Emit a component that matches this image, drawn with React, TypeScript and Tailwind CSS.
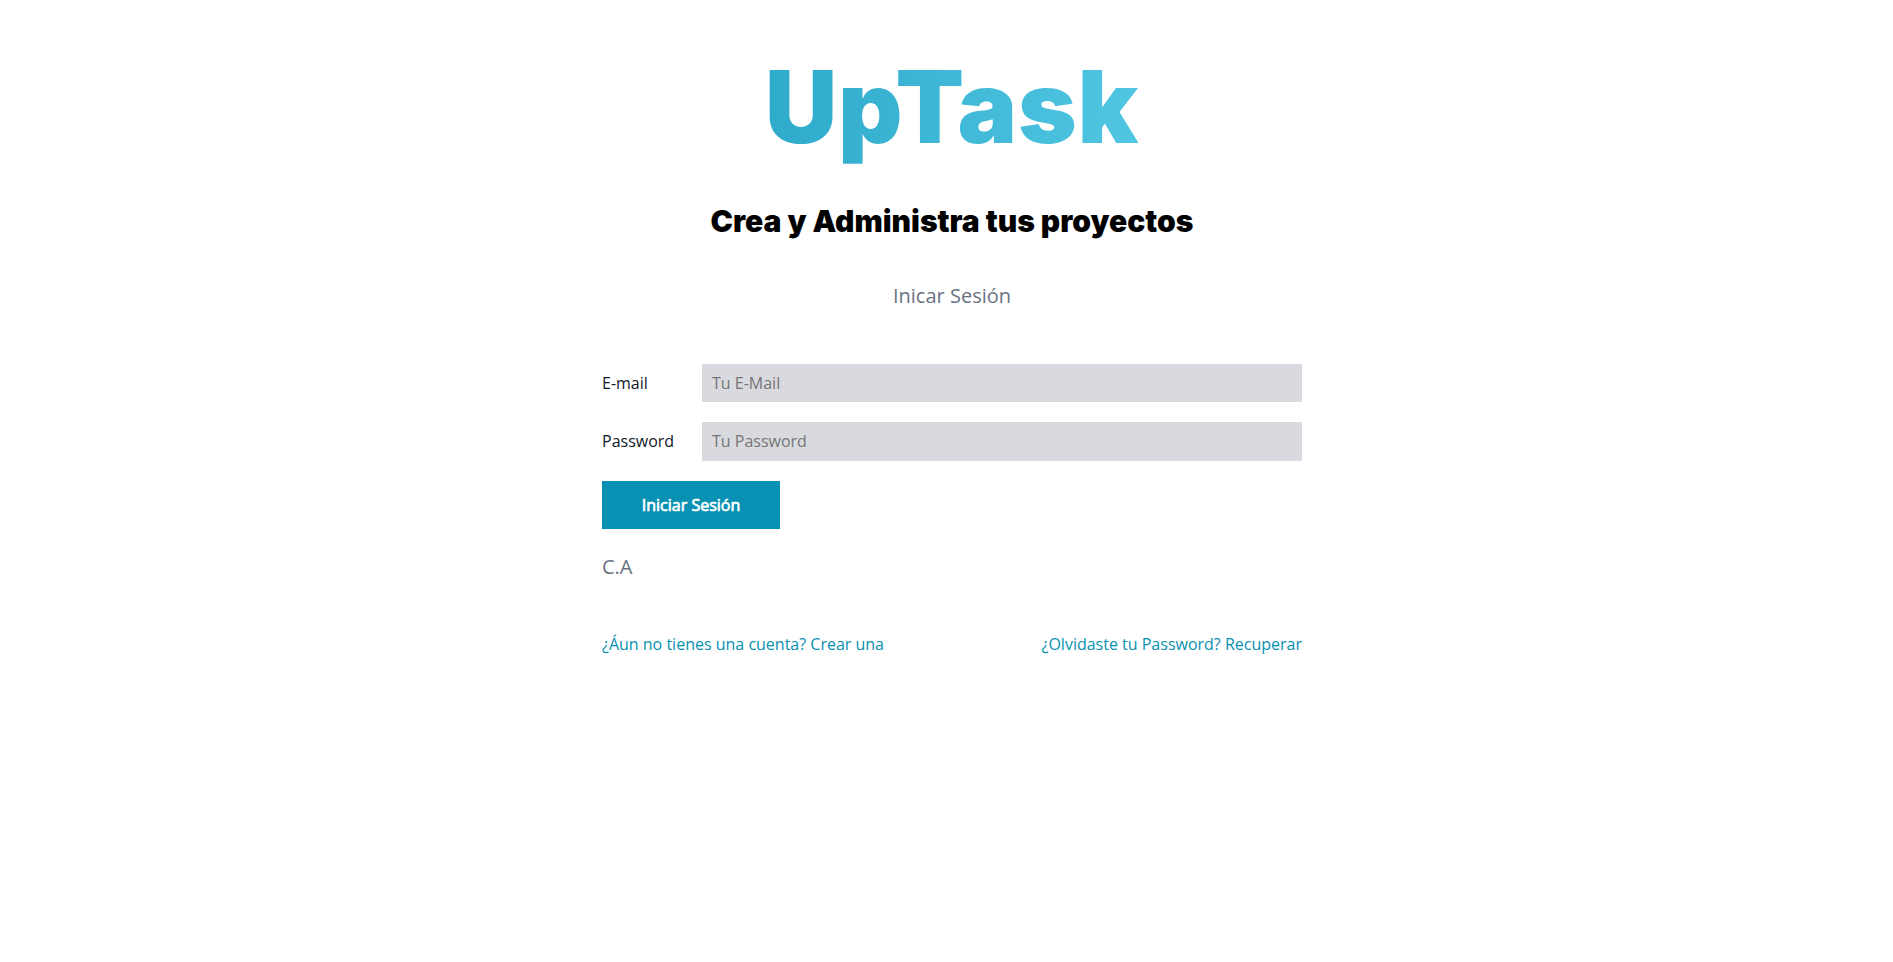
export default function App() {
  return (
    <div className="min-h-[962px] bg-white pl-[11px] font-['Open_Sans',sans-serif]">
      <main className="mx-auto w-[700px] pt-[44px]">
        <h1 className="mx-auto w-fit bg-gradient-to-r from-[#2eaacb] to-[#50c6e2] bg-clip-text text-center font-['Inter',sans-serif] text-[100px] leading-[125px] font-[880] tracking-[0.8px] text-transparent">
          UpTask
        </h1>
        <h2 className="mt-[34px] text-center font-['Inter',sans-serif] text-3xl leading-9 font-[880] text-black">
          Crea y Administra tus proyectos
        </h2>
        <p className="mt-[43px] text-center text-xl leading-7 text-gray-500">Inicar Sesión</p>
        <form className="mt-[54px]">
          <div className="flex items-center">
            <label className="w-[100px] text-base text-gray-900">E-mail</label>
            <input
              placeholder="Tu E-Mail"
              className="h-[38px] flex-1 bg-[#d9dae0] px-[10px] text-base placeholder:text-[#757575]"
            />
          </div>
          <div className="mt-[20px] flex items-center">
            <label className="w-[100px] pb-[1px] text-base text-gray-900">Password</label>
            <input
              placeholder="Tu Password"
              className="h-[39px] flex-1 bg-[#d9dae0] px-[10px] pb-[2px] text-base placeholder:text-[#757575]"
            />
          </div>
          <button className="mt-[20px] h-[48px] w-[178px] bg-[#0891b2] text-base font-normal text-white [-webkit-text-stroke:0.7px_white]">
            Iniciar Sesión
          </button>
        </form>
        <p className="mt-[24px] text-xl leading-7 text-gray-500">C.A</p>
        <div className="mt-[51px] flex justify-between text-base leading-6 text-[#0891b2]">
          <a>¿Áun no tienes una cuenta? Crear una</a>
          <a>¿Olvidaste tu Password? Recuperar</a>
        </div>
      </main>
    </div>
  );
}
